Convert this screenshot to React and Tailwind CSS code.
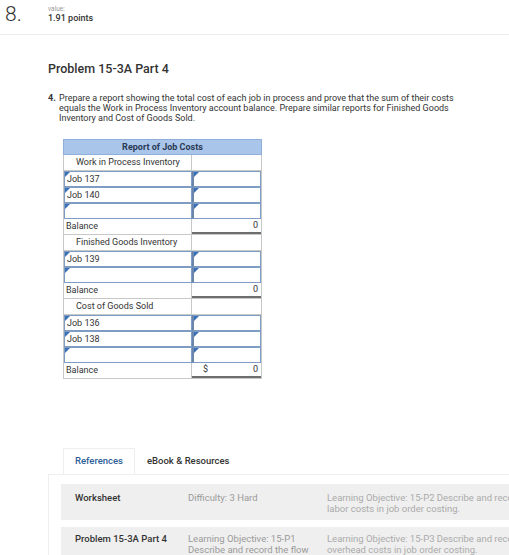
import React from "react";

const SECTIONS = [
  { title: "Work in Process Inventory", jobs: ["Job 137", "Job 140", ""], dollar: false },
  { title: "Finished Goods Inventory", jobs: ["Job 139", ""], dollar: false },
  { title: "Cost of Goods Sold", jobs: ["Job 136", "Job 138", ""], dollar: true },
];

function Flag() {
  return (
    <span className="absolute left-0 top-0 w-0 h-0 border-t-[5px] border-r-[5px] border-t-[#3b6fb6] border-r-transparent" />
  );
}

function InputRow({ label }) {
  return (
    <div className="flex h-4 border-x border-[#c8c8c8]">
      <div className="relative w-[128px] border border-[#7f9cc4] text-[9px] leading-[14px] pl-[2px] text-[#333]">
        <Flag />
        {label}
      </div>
      <div className="relative flex-1 border border-[#7f9cc4] border-l-2 border-l-[#6b86ad]">
        <Flag />
      </div>
    </div>
  );
}

function TitleRow({ title }) {
  return (
    <div className="flex h-4 border-x border-b border-[#c8c8c8]">
      <div className="w-[128px] border-r border-[#c8c8c8] text-[9px] leading-[15px] pl-3 text-[#333]">{title}</div>
      <div className="flex-1" />
    </div>
  );
}

function BalanceRow({ dollar }) {
  return (
    <div className="flex h-4 border-x border-b border-[#c8c8c8]">
      <div className="w-[128px] border-r border-[#c8c8c8] text-[9px] leading-[15px] pl-[2px] text-[#333]">Balance</div>
      <div className="flex-1 flex justify-between items-center border-b-2 border-[#6e6e6e] px-[3px] text-[9px] text-[#333]">
        <span className="pl-2">{dollar ? "$" : ""}</span>
        <span>0</span>
      </div>
    </div>
  );
}

export default function App() {
  return (
    <div className="w-[509px] h-[555px] overflow-hidden bg-white text-[#222]" style={{ fontFamily: "Roboto, 'Liberation Sans', sans-serif" }}>
      {/* question header */}
      <div className="flex items-start pt-[3px] pb-[9px] border-b border-[#ececec]">
        <div className="w-[48px] pl-[5px] text-[21px] leading-[22px] font-light text-[#333]">8.</div>
        <div className="pt-[2px]">
          <div className="text-[6.5px] leading-[8px] text-[#999]">value:</div>
          <div className="text-[9px] leading-[11px] font-medium text-[#333]">1.91 points</div>
        </div>
      </div>

      <div className="pl-[48px]">
        <h1 className="mt-[26px] text-[12.5px] leading-[16px] font-medium text-[#333]">Problem 15-3A Part 4</h1>

        <div className="flex mt-[16px] text-[9px] leading-[10px] text-[#333]">
          <span className="w-[11px] font-bold">4.</span>
          <p className="w-[402px]">
            Prepare a report showing the total cost of each job in process and prove that the sum of their costs equals the Work in Process Inventory account balance. Prepare similar reports for Finished Goods Inventory and Cost of Goods Sold.
          </p>
        </div>

        {/* report table */}
        <div className="ml-[15px] mt-[16px] w-[199px]">
          <div className="h-4 bg-[#a9c6ea] border border-[#8eafd9] text-center text-[9px] leading-[14px] font-bold text-[#2a3a55]">
            Report of Job Costs
          </div>
          {SECTIONS.map((s) => (
            <div key={s.title}>
              <TitleRow title={s.title} />
              {s.jobs.map((j, i) => (
                <InputRow key={i} label={j} />
              ))}
              <BalanceRow dollar={s.dollar} />
            </div>
          ))}
        </div>

        {/* references */}
        <div className="mt-[69px] flex text-[9.5px] font-medium">
          <div className="ml-[15px] w-[72px] h-[26px] border border-b-0 border-[#eeeeee] bg-white flex items-center justify-center text-[#2f5f98]">References</div>
          <div className="ml-[12px] flex items-center text-[#333]">eBook &amp; Resources</div>
        </div>
        <div className="border-t border-l border-[#eeeeee] pt-[9px] pl-[12px] w-[600px] text-[9.5px] leading-[11px]">
          <div className="flex bg-[#efefef] h-[36px] pt-[8px] pl-[14px]">
            <div className="w-[113px] font-medium text-[#333]">Worksheet</div>
            <div className="w-[139px] text-[#9a9a9a]">Difficulty: 3 Hard</div>
            <div className="w-[210px] text-[#ababab]">Learning Objective: 15-P2 Describe and record labor costs in job order costing.</div>
          </div>
          <div className="flex bg-[#efefef] h-[36px] mt-[7px] pt-[6px] pl-[14px]">
            <div className="w-[113px] font-medium text-[#333]">Problem 15-3A Part 4</div>
            <div className="w-[132px] mr-[7px] text-[#9a9a9a]">Learning Objective: 15-P1 Describe and record the flow</div>
            <div className="w-[210px] text-[#ababab]">Learning Objective: 15-P3 Describe and record overhead costs in job order costing.</div>
          </div>
        </div>
      </div>
    </div>
  );
}
